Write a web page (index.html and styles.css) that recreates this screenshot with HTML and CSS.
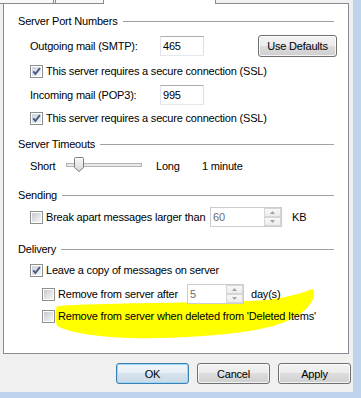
FILE: index.html
```html
<!DOCTYPE html>
<html>
<head>
<meta charset="utf-8">
<link rel="stylesheet" href="styles.css">
</head>
<body>
<svg class="defs" width="0" height="0">
  <defs>
    <linearGradient id="cbg" x1="0" y1="0" x2="1" y2="1">
      <stop offset="0" stop-color="#c6cacf"/>
      <stop offset="1" stop-color="#f7f7f7"/>
    </linearGradient>
    <linearGradient id="cbgc" x1="0" y1="0" x2="1" y2="1">
      <stop offset="0" stop-color="#cdd3dc"/>
      <stop offset="1" stop-color="#f4f6f9"/>
    </linearGradient>
    <linearGradient id="thumb" x1="0" y1="0" x2="0" y2="1">
      <stop offset="0" stop-color="#fbfbfb"/>
      <stop offset="1" stop-color="#d6d6d6"/>
    </linearGradient>
  </defs>
</svg>
<div class="dialog">
  <div class="tabstrip">
    <div class="tab tab-a"></div>
    <div class="tab-gap"></div>
    <div class="tab tab-b"></div>
    <div class="tab-sel"></div>
    <div class="tab-rest"></div>
  </div>
  <div class="panel">
    <svg class="highlight" viewBox="3 4 346 350" width="346" height="350">
      <path d="M57 306 C100 303 180 303 250 301 C275 300 295 296 312 289 C316 292 314 300 308 307 C298 318 280 326 250 331 C215 336 170 339 130 338 C95 337 68 332 57 326 C55 320 55 311 57 306 Z" fill="#ffff00"/>
    </svg>
    <div class="content">
      <div class="head"><span>Server Port Numbers</span><i class="rule"></i></div>

      <div class="row gap5">
        <span class="label-port">Outgoing mail (SMTP):</span>
        <span class="field">465</span>
        <span class="btn btn-defaults">Use Defaults</span>
      </div>
      <div class="row gap5">
        <span class="cb"><svg width="13" height="13" viewBox="0 0 13 13"><rect x="0.5" y="0.5" width="12" height="12" fill="#fff" stroke="#8e8f8f"/><rect x="2" y="2" width="9" height="9" fill="url(#cbgc)"/><path d="M3.2 6.3 L5.4 8.9 L9.9 3.1" fill="none" stroke="#4a5d86" stroke-width="1.9"/></svg></span>
        <span>This server requires a secure connection (SSL)</span>
      </div>
      <div class="row gap4">
        <span class="label-port">Incoming mail (POP3):</span>
        <span class="field">995</span>
      </div>
      <div class="row gap3">
        <span class="cb"><svg width="13" height="13" viewBox="0 0 13 13"><rect x="0.5" y="0.5" width="12" height="12" fill="#fff" stroke="#8e8f8f"/><rect x="2" y="2" width="9" height="9" fill="url(#cbgc)"/><path d="M3.2 6.3 L5.4 8.9 L9.9 3.1" fill="none" stroke="#4a5d86" stroke-width="1.9"/></svg></span>
        <span>This server requires a secure connection (SSL)</span>
      </div>

      <div class="head gap6"><span>Server Timeouts</span><i class="rule"></i></div>
      <div class="row gap2">
        <span class="lbl-short">Short</span>
        <svg class="slider" width="76" height="20" viewBox="0 0 76 20">
          <rect x="0.5" y="7.5" width="75" height="3" fill="#e8eaea" stroke="#b4b4b4"/>
          <path d="M8.5 2.5 Q8.5 1.5 9.5 1.5 H16.5 Q17.5 1.5 17.5 2.5 V11.5 L13 15.5 L8.5 11.5 Z" fill="url(#thumb)" stroke="#7d7d7d"/>
        </svg>
        <span class="lbl-long">Long</span>
        <span>1 minute</span>
      </div>

      <div class="head gap9"><span>Sending</span><i class="rule"></i></div>
      <div class="row gap2">
        <span class="cb"><svg width="13" height="13" viewBox="0 0 13 13"><rect x="0.5" y="0.5" width="12" height="12" fill="#fff" stroke="#8e8f8f"/><rect x="2" y="2" width="9" height="9" fill="url(#cbg)"/></svg></span>
        <span class="lbl-break">Break apart messages larger than</span>
        <span class="spin spin-kb">
          <span class="spin-val">60</span>
          <span class="spin-btns">
            <span class="spin-b"><svg width="5" height="3" viewBox="0 0 5 3"><path d="M0 3 L2.5 0 L5 3 Z" fill="#a3a3a3"/></svg></span>
            <span class="spin-b"><svg width="5" height="3" viewBox="0 0 5 3"><path d="M0 0 L2.5 3 L5 0 Z" fill="#a3a3a3"/></svg></span>
          </span>
        </span>
        <span class="unit-kb">KB</span>
      </div>

      <div class="head gap12"><span>Delivery</span><i class="rule"></i></div>
      <div class="row gap1">
        <span class="cb"><svg width="13" height="13" viewBox="0 0 13 13"><rect x="0.5" y="0.5" width="12" height="12" fill="#fff" stroke="#8e8f8f"/><rect x="2" y="2" width="9" height="9" fill="url(#cbgc)"/><path d="M3.2 6.3 L5.4 8.9 L9.9 3.1" fill="none" stroke="#4a5d86" stroke-width="1.9"/></svg></span>
        <span>Leave a copy of messages on server</span>
      </div>
      <div class="row sub gap4">
        <span class="cb"><svg width="13" height="13" viewBox="0 0 13 13"><rect x="0.5" y="0.5" width="12" height="12" fill="#fff" stroke="#8e8f8f"/><rect x="2" y="2" width="9" height="9" fill="url(#cbg)"/></svg></span>
        <span class="lbl-after">Remove from server after</span>
        <span class="spin spin-days">
          <span class="spin-val">5</span>
          <span class="spin-btns">
            <span class="spin-b"><svg width="5" height="3" viewBox="0 0 5 3"><path d="M0 3 L2.5 0 L5 3 Z" fill="#a3a3a3"/></svg></span>
            <span class="spin-b"><svg width="5" height="3" viewBox="0 0 5 3"><path d="M0 0 L2.5 3 L5 0 Z" fill="#a3a3a3"/></svg></span>
          </span>
        </span>
        <span class="unit-days">day(s)</span>
      </div>
      <div class="row sub gap2">
        <span class="cb"><svg width="13" height="13" viewBox="0 0 13 13"><rect x="0.5" y="0.5" width="12" height="12" fill="#fff" stroke="#8e8f8f"/><rect x="2" y="2" width="9" height="9" fill="url(#cbg)"/></svg></span>
        <span>Remove from server when deleted from 'Deleted Items'</span>
      </div>
    </div>
  </div>
  <div class="buttons">
    <span class="btn btn-default">OK</span>
    <span class="btn">Cancel</span>
    <span class="btn">Apply</span>
  </div>
</div>
</body>
</html>
```

FILE: styles.css
```css
* { box-sizing: border-box; }
html, body { margin: 0; padding: 0; }
body {
  width: 361px;
  height: 398px;
  overflow: hidden;
  background: #bfd4ec;
  font-family: "Liberation Sans", Arial, sans-serif;
  font-size: 11px;
  letter-spacing: -0.2px;
  color: #000;
}
.defs { position: absolute; width: 0; height: 0; }

.dialog {
  width: 353px;
  height: 392px;
  background: #f0f0f0;
}

/* tab strip remnants */
.tabstrip { display: flex; width: 349px; height: 4px; }
.tab { height: 4px; background: #f8f8f8; border-bottom: 1px solid #898c95; }
.tab-a { width: 54px; border-right: 1px solid #898c95; }
.tab-gap { width: 1px; height: 4px; border-bottom: 1px solid #898c95; }
.tab-b { width: 48px; border-left: 1px solid #898c95; }
.tab-sel {
  width: 113px; height: 4px; background: #fff;
  border-left: 1px solid #898c95; border-right: 1px solid #898c95;
}
.tab-rest { flex: 1; height: 4px; border-bottom: 1px solid #898c95; }

.panel {
  position: relative;
  margin-left: 3px;
  width: 346px;
  height: 350px;
  background: #fff;
  border: 1px solid #898c95;
  border-top: none;
  padding: 7px 11px 0 14px;
}
.highlight { position: absolute; left: -1px; top: 0; }
.content { position: relative; z-index: 1; display: flex; flex-direction: column; }

.head { display: flex; align-items: center; height: 20px; white-space: nowrap; }
.head .rule { flex: 1; height: 1px; background: #a0a0a0; margin: 0 3px 0 5px; }

.row { display: flex; align-items: center; height: 20px; padding-left: 12px; white-space: nowrap; }
.row.sub { padding-left: 24px; }

.gap1 { margin-top: 1px; }
.gap2 { margin-top: 2px; }
.gap3 { margin-top: 3px; }
.gap4 { margin-top: 4px; }
.gap5 { margin-top: 5px; }
.gap6 { margin-top: 6px; }
.gap9 { margin-top: 9px; }
.gap12 { margin-top: 12px; }

.cb { width: 13px; height: 13px; margin-right: 3px; flex: none; display: block; }
.cb svg { display: block; }

.label-port { width: 130px; flex: none; }
.field {
  width: 44px; height: 20px; flex: none;
  border: 1px solid #dbdfe6;
  border-top-color: #abadb3;
  border-left-color: #e2e3ea;
  border-bottom-color: #e3e9ef;
  background: #fff;
  padding-left: 2px;
  line-height: 18px;
}

.btn {
  display: flex; align-items: center; justify-content: center;
  width: 73px; height: 21px; flex: none;
  border: 1px solid #707070;
  border-radius: 3px;
  background: linear-gradient(#f2f2f2 0%, #ebebeb 50%, #dddddd 50%, #cfcfcf 100%);
  box-shadow: inset 0 0 0 1px rgba(255,255,255,0.75);
}
.btn-defaults { width: 79px; height: 22px; margin-left: auto; }
.btn-default {
  border-color: #3c7fb1;
  box-shadow: inset 0 0 0 1px #9fd8f6;
  background: linear-gradient(#f1f6fa 0%, #e6eef5 50%, #d6e3ee 50%, #c9d9e6 100%);
}

.lbl-short { width: 36px; flex: none; }
.slider { display: block; flex: none; }
.lbl-long { width: 46px; margin-left: 14px; flex: none; }

.lbl-break { width: 164px; flex: none; }
.lbl-after { width: 129px; flex: none; }

.spin {
  display: flex; height: 20px; flex: none;
  border: 1px solid #c9cdd3;
  background: #fff;
}
.spin-kb { width: 72px; }
.spin-days { width: 57px; }
.spin-val { flex: 1; padding-left: 2px; line-height: 18px; color: #6d6d6d; }
.spin-btns { width: 17px; display: flex; flex-direction: column; }
.spin-b {
  flex: 1; display: flex; align-items: center; justify-content: center;
  border: 1px solid #d6d6d6;
  background: linear-gradient(#f8f8f8, #ececec);
}
.spin-b svg { display: block; }
.unit-kb { margin-left: 10px; }
.unit-days { margin-left: 7px; }

.buttons {
  display: flex; justify-content: flex-end; gap: 8px;
  padding: 9px 2px 0 0;
}
```
